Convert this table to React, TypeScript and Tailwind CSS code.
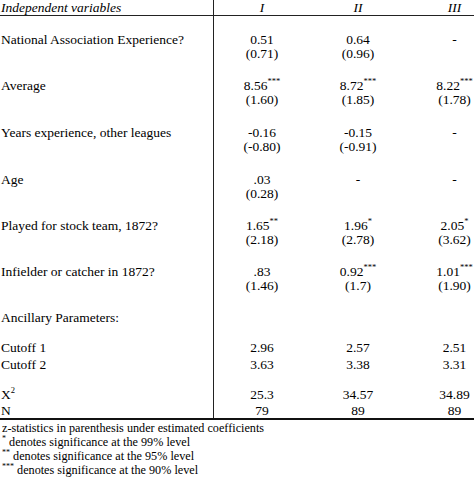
import React from 'react'

// Ordered-probit style regression table, cropped at the right edge
type Row = {
  label: React.ReactNode
  h: string
  vals?: [React.ReactNode, React.ReactNode, React.ReactNode]
  zs?: [string, string, string]
}

const Star = ({ n }: { n: number }) => (
  <sup className="text-[8.5px] top-[-0.65em]">{'*'.repeat(n)}</sup>
)

const ROWS: Row[] = [
  { label: '', h: 'h-[17px]' },
  { label: 'National Association Experience?', h: 'h-[46px]', vals: ['0.51', '0.64', '-'], zs: ['(0.71)', '(0.96)', ''] },
  {
    label: 'Average', h: 'h-[47px]',
    vals: [<>8.56<Star n={3} /></>, <>8.72<Star n={3} /></>, <>8.22<Star n={3} /></>],
    zs: ['(1.60)', '(1.85)', '(1.78)'],
  },
  { label: 'Years experience, other leagues', h: 'h-[47px]', vals: ['-0.16', '-0.15', '-'], zs: ['(-0.80)', '(-0.91)', ''] },
  { label: 'Age', h: 'h-[46px]', vals: ['.03', '-', '-'], zs: ['(0.28)', '', ''] },
  {
    label: 'Played for stock team, 1872?', h: 'h-[46px]',
    vals: [<>1.65<Star n={2} /></>, <>1.96<Star n={1} /></>, <>2.05<Star n={1} /></>],
    zs: ['(2.18)', '(2.78)', '(3.62)'],
  },
  {
    label: 'Infielder or catcher in 1872?', h: 'h-[46px]',
    vals: ['.83', <>0.92<Star n={3} /></>, <>1.01<Star n={3} /></>],
    zs: ['(1.46)', '(1.7)', '(1.90)'],
  },
  { label: 'Ancillary Parameters:', h: 'h-[30px]' },
  { label: 'Cutoff 1', h: 'h-[17px]', vals: ['2.96', '2.57', '2.51'] },
  { label: 'Cutoff 2', h: 'h-[30px]', vals: ['3.63', '3.38', '3.31'] },
  { label: <>X<sup className="text-[8.5px] top-[-0.65em]">2</sup></>, h: 'h-[16px]', vals: ['25.3', '34.57', '34.89'] },
  { label: 'N', h: 'h-[14px]', vals: ['79', '89', '89'] },
]

export default function App() {
  return (
    <div className="w-[474px] h-[477px] overflow-hidden bg-white text-black font-['Liberation_Serif','Times_New_Roman',serif] text-[13.5px] leading-[14px]">
      <div className="w-[503px]">
        {/* Header */}
        <div className="grid grid-cols-[214px_96px_96px_97px] h-[16px] border-b border-[#222] italic leading-[15px]">
          <div className="border-r border-[#222] pl-[1px]">Independent variables</div>
          <div className="text-center">I</div>
          <div className="text-center">II</div>
          <div className="text-center">III</div>
        </div>

        {/* Body */}
        {ROWS.map((r, i) => (
          <div
            key={i}
            className={`grid grid-cols-[214px_96px_96px_97px] ${r.h} ${i === ROWS.length - 1 ? 'border-b-2 border-[#111] box-content' : ''}`}
          >
            <div className="border-r border-[#222] pl-[1px] whitespace-nowrap">{r.label}</div>
            {[0, 1, 2].map(c => (
              <div key={c} className="text-center whitespace-nowrap">
                {r.vals && <div>{r.vals[c]}</div>}
                {r.zs && <div>{r.zs[c]}</div>}
              </div>
            ))}
          </div>
        ))}
      </div>

      {/* Notes */}
      <div className="pt-[1px] pl-[2px] text-[12.2px] leading-[14px] whitespace-nowrap">
        <div>z-statistics in parenthesis under estimated coefficients</div>
        <div><sup className="text-[8px] top-[-0.6em]">*</sup> denotes significance at the 99% level</div>
        <div><sup className="text-[8px] top-[-0.6em]">**</sup> denotes significance at the 95% level</div>
        <div><sup className="text-[8px] top-[-0.6em]">***</sup> denotes significance at the 90% level</div>
      </div>
    </div>
  )
}
